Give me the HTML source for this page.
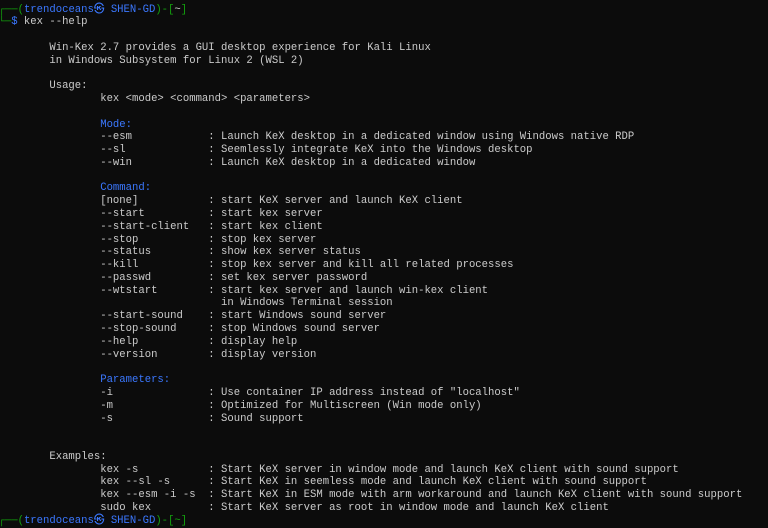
<!DOCTYPE html>
<html><head><meta charset="utf-8"><style>
html,body{margin:0;padding:0;background:#0c0c0c;width:768px;height:518px;overflow:hidden}
pre{margin:0;position:absolute;left:-1.5px;top:3.5px;font-family:"Liberation Mono","DejaVu Sans Mono",monospace;font-size:10.6px;line-height:12.78px;color:#cccccc}
.b{color:#3b78ff}.g{color:#13a10e}
</style></head><body><pre><span class="g">┌──(</span><span class="b">trendoceans㉿ SHEN-GD</span><span class="g">)-[</span><span style="color:#cccccc">~</span><span class="g">]</span>
<span class="g">└─</span><span class="b">$</span> kex --help

        Win-Kex 2.7 provides a GUI desktop experience for Kali Linux
        in Windows Subsystem for Linux 2 (WSL 2)

        Usage:
                kex &lt;mode&gt; &lt;command&gt; &lt;parameters&gt;

                <span class="b">Mode:</span>
                --esm            : Launch KeX desktop in a dedicated window using Windows native RDP
                --sl             : Seemlessly integrate KeX into the Windows desktop
                --win            : Launch KeX desktop in a dedicated window

                <span class="b">Command:</span>
                [none]           : start KeX server and launch KeX client
                --start          : start kex server
                --start-client   : start kex client
                --stop           : stop kex server
                --status         : show kex server status
                --kill           : stop kex server and kill all related processes
                --passwd         : set kex server password
                --wtstart        : start kex server and launch win-kex client
                                   in Windows Terminal session
                --start-sound    : start Windows sound server
                --stop-sound     : stop Windows sound server
                --help           : display help
                --version        : display version

                <span class="b">Parameters:</span>
                -i               : Use container IP address instead of "localhost"
                -m               : Optimized for Multiscreen (Win mode only)
                -s               : Sound support


        Examples:
                kex -s           : Start KeX server in window mode and launch KeX client with sound support
                kex --sl -s      : Start KeX in seemless mode and launch KeX client with sound support
                kex --esm -i -s  : Start KeX in ESM mode with arm workaround and launch KeX client with sound support
                sudo kex         : Start KeX server as root in window mode and launch KeX client
<span class="g">┌──(</span><span class="b">trendoceans㉿ SHEN-GD</span><span class="g">)-[~]</span>
</pre></body></html>
